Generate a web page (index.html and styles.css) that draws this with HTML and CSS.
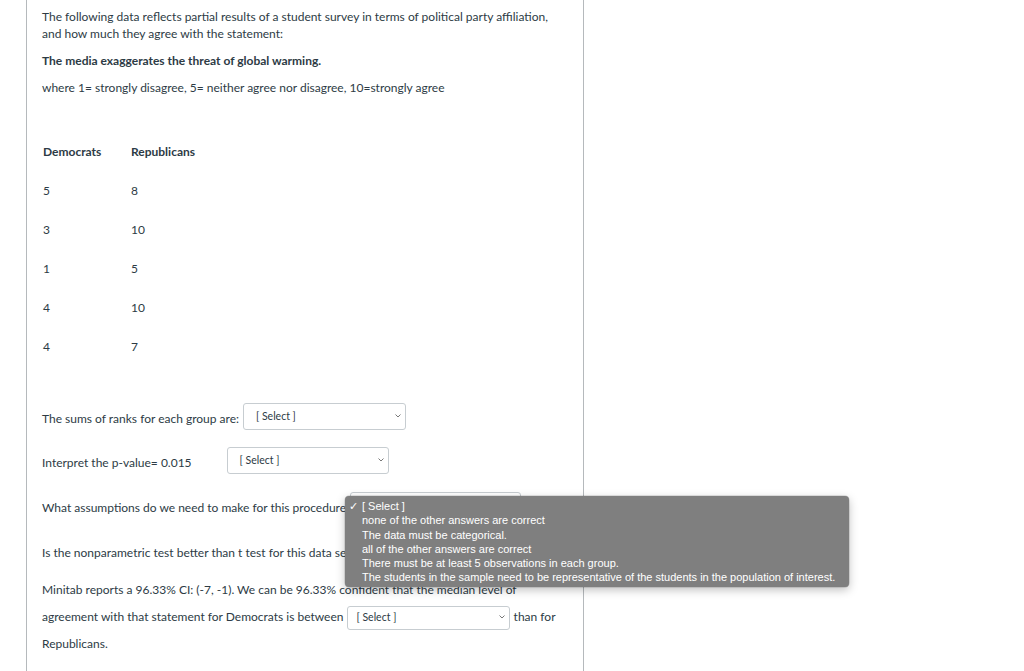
FILE: index.html
```html
<!DOCTYPE html>
<html lang="en">
<head>
<meta charset="utf-8">
<title>Survey question</title>
<link rel="stylesheet" href="styles.css">
</head>
<body>
<div class="panel">
  <p class="intro">The following data reflects partial results of a student survey in terms of political party affiliation, and how much they agree with the statement:</p>
  <p class="strong">The media exaggerates the threat of global warming.</p>
  <p class="scale">where 1= strongly disagree, 5= neither agree nor disagree, 10=strongly agree</p>

  <table class="data">
    <tr><th>Democrats</th><th>Republicans</th></tr>
    <tr><td>5</td><td>8</td></tr>
    <tr><td>3</td><td>10</td></tr>
    <tr><td>1</td><td>5</td></tr>
    <tr><td>4</td><td>10</td></tr>
    <tr><td>4</td><td>7</td></tr>
  </table>

  <div class="qrow q1"><span class="label">The sums of ranks for each group are:</span><span class="sel w163"><span class="sel-text">[ Select ]</span><svg class="chev" viewBox="0 0 6 4" width="6" height="4"><path d="M0.5 0.5 L3 3 L5.5 0.5" fill="none" stroke="#555" stroke-width="0.8"/></svg></span></div>
  <div class="qrow q2"><span class="label">Interpret the p-value= 0.015</span><span class="sel w162 gap35"><span class="sel-text">[ Select ]</span><svg class="chev" viewBox="0 0 6 4" width="6" height="4"><path d="M0.5 0.5 L3 3 L5.5 0.5" fill="none" stroke="#555" stroke-width="0.8"/></svg></span></div>
  <div class="qrow q3"><span class="label">What assumptions do we need to make for this procedure</span><span class="sel w171"><span class="sel-text">[ Select ]</span><svg class="chev" viewBox="0 0 6 4" width="6" height="4"><path d="M0.5 0.5 L3 3 L5.5 0.5" fill="none" stroke="#555" stroke-width="0.8"/></svg></span></div>
  <div class="qrow q4"><span class="label">Is the nonparametric test better than t test for this data set?</span><span class="sel w163"><span class="sel-text">[ Select ]</span><svg class="chev" viewBox="0 0 6 4" width="6" height="4"><path d="M0.5 0.5 L3 3 L5.5 0.5" fill="none" stroke="#555" stroke-width="0.8"/></svg></span></div>

  <p class="minitab">Minitab reports a 96.33% CI: (-7, -1). We can be 96.33% confident that the median level of agreement with that statement for Democrats is between <span class="sel inline w163"><span class="sel-text">[ Select ]</span><svg class="chev" viewBox="0 0 6 4" width="6" height="4"><path d="M0.5 0.5 L3 3 L5.5 0.5" fill="none" stroke="#555" stroke-width="0.8"/></svg></span> than for Republicans.</p>

  <div class="popup">
    <div class="opt checked"><span class="check">✓</span>[ Select ]</div>
    <div class="opt">none of the other answers are correct</div>
    <div class="opt">The data must be categorical.</div>
    <div class="opt">all of the other answers are correct</div>
    <div class="opt">There must be at least 5 observations in each group.</div>
    <div class="opt">The students in the sample need to be representative of the students in the population of interest.</div>
  </div>
</div>
</body>
</html>
```

FILE: styles.css
```css
html, body {
  margin: 0;
  padding: 0;
  background: #ffffff;
}
body {
  font-family: Lato, "Open Sans", "Liberation Sans", sans-serif;
  font-size: 12px;
  color: #2d3b45;
  overflow: hidden;
  height: 671px;
}
.panel {
  margin-left: 26px;
  width: 525px;
  min-height: 700px;
  border-left: 1px solid #b5b9bc;
  border-right: 1px solid #b5b9bc;
  padding: 8px 16px 0 15px;
}
p {
  margin: 0;
  line-height: 17px;
}
.strong {
  font-weight: bold;
  margin-top: 10px;
}
.scale {
  margin-top: 10px;
}
.data {
  border-collapse: collapse;
  margin-top: 36px;
}
.data th, .data td {
  height: 39px;
  padding: 0;
  text-align: left;
  vertical-align: middle;
  font-size: 12px;
}
.data th {
  font-weight: bold;
  width: 88px;
}
.data td:first-child, .data th:first-child {
  padding-left: 1px;
}
.qrow {
  display: flex;
  align-items: center;
  height: 27px;
}
.qrow .label {
  padding-top: 3px;
  white-space: nowrap;
}
.q1 { margin-top: 37px; }
.q2 { margin-top: 17px; }
.q3 { margin-top: 18px; }
.q4 { margin-top: 18px; }
.sel {
  display: inline-flex;
  align-items: center;
  justify-content: space-between;
  box-sizing: border-box;
  height: 27px;
  border: 1px solid #c7cdd1;
  border-radius: 3px;
  background: #fff;
  padding: 0 4px 0 12px;
  margin-left: 4px;
  flex-shrink: 0;
}
.sel-text {
  font-size: 10.5px;
  color: #2d3b45;
  padding-bottom: 1px;
}
.chev {
  display: block;
  margin-bottom: 1px;
}
.w163 { width: 163px; }
.w162 { width: 162px; }
.w171 { width: 171px; }
.gap35 { margin-left: 35px; }
.minitab {
  margin-top: 12px;
  line-height: 27px;
  width: 526px;
}
.sel.inline {
  height: 24px;
  vertical-align: middle;
  margin-left: 0;
  margin-right: 1px;
  padding-left: 9px;
}
.popup {
  position: absolute;
  left: 345px;
  top: 496px;
  width: 504px;
  height: 91px;
  box-sizing: border-box;
  background: #7f7f7f;
  border-radius: 4px;
  box-shadow: 0 3px 10px rgba(0,0,0,0.25), 0 0 0 0.5px rgba(0,0,0,0.2);
  padding: 3px 0 0 17px;
  font-family: "Liberation Sans", Arial, sans-serif;
  font-size: 11px;
  color: #ffffff;
}
.opt {
  position: relative;
  height: 14.3px;
  line-height: 14px;
  white-space: nowrap;
}
.check {
  position: absolute;
  left: -13px;
  top: 0;
}
```
